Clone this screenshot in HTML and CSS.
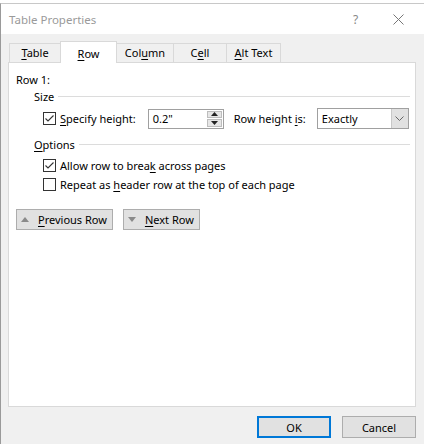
FILE: index.html
```html
<!DOCTYPE html>
<html lang="en">
<head>
  <meta charset="UTF-8">
  <title>Table Properties</title>
  <link rel="stylesheet" href="styles.css">
</head>
<body>
  <div class="window">
    <div class="titlebar">
      <span class="title">Table Properties</span>
      <span class="help">?</span>
      <span class="close">
        <svg width="11" height="11" viewBox="0 0 11 11"><path d="M0.5 0.5 L10.5 10.5 M10.5 0.5 L0.5 10.5" stroke="#777" stroke-width="1" fill="none"/></svg>
      </span>
    </div>

    <div class="client">
      <div class="tabs">
        <div class="tab tab-table"><u>T</u>able</div>
        <div class="tab tab-row selected"><u>R</u>ow</div>
        <div class="tab tab-column">Col<u>u</u>mn</div>
        <div class="tab tab-cell">C<u>e</u>ll</div>
        <div class="tab tab-alt"><u>A</u>lt Text</div>
      </div>

      <div class="panel">
        <div class="heading">Row 1:</div>

        <div class="group">
          <div class="group-title"><span>Size</span><div class="rule"></div></div>
          <div class="row">
            <span class="check"><svg width="11" height="11" viewBox="0 0 11 11"><path d="M1.5 5.5 L4 8 L9.5 2.5" stroke="#333" stroke-width="1.1" fill="none"/></svg></span>
            <span class="label"><u>S</u>pecify height:</span>
            <div class="spin">
              <span class="value">0.2"</span>
              <div class="spin-btns">
                <span class="spin-btn"><svg width="7" height="4" viewBox="0 0 7 4"><path d="M0 4 L3.5 0 L7 4 Z" fill="#222"/></svg></span>
                <span class="spin-btn"><svg width="7" height="4" viewBox="0 0 7 4"><path d="M0 0 L3.5 4 L7 0 Z" fill="#222"/></svg></span>
              </div>
            </div>
            <span class="label label-gap">Row height <u>i</u>s:</span>
            <div class="select">
              <span class="value">Exactly</span>
              <span class="drop"><svg width="9" height="5" viewBox="0 0 9 5"><path d="M0.5 0.5 L4.5 4.5 L8.5 0.5" stroke="#666" stroke-width="1" fill="none"/></svg></span>
            </div>
          </div>
        </div>

        <div class="group">
          <div class="group-title"><span><u>O</u>ptions</span><div class="rule"></div></div>
          <div class="option first">
            <span class="check"><svg width="11" height="11" viewBox="0 0 11 11"><path d="M1.5 5.5 L4 8 L9.5 2.5" stroke="#333" stroke-width="1.1" fill="none"/></svg></span>
            <span class="label">Allow row to brea<u>k</u> across pages</span>
          </div>
          <div class="option">
            <span class="check"></span>
            <span class="label">Repeat as <u>h</u>eader row at the top of each page</span>
          </div>
        </div>

        <div class="nav">
          <button class="btn nav-btn"><span class="tri up"></span><u>P</u>revious Row</button>
          <button class="btn nav-btn"><span class="tri down"></span><u>N</u>ext Row</button>
        </div>
      </div>

      <div class="footer">
        <button class="btn default">OK</button>
        <button class="btn">Cancel</button>
      </div>
    </div>
  </div>
</body>
</html>
```

FILE: styles.css
```css
* {
  box-sizing: border-box;
}

html, body {
  margin: 0;
  background: #fff;
}

body {
  padding-top: 3px;
  font-family: "Noto Sans", "Open Sans", sans-serif;
  font-size: 11px;
  color: #000;
}

u {
  text-decoration: underline;
  text-underline-offset: 2px;
}

.window {
  height: 441px;
  border-top: 1px solid #c8c8c8;
  border-left: 1px solid #9a9a9a;
  display: flex;
  flex-direction: column;
}

.titlebar {
  height: 30px;
  flex-shrink: 0;
  background: #fff;
  display: flex;
  align-items: center;
  padding-left: 8px;
}

.title {
  color: #9a9a9a;
  font-size: 11.5px;
  flex: 1;
}

.help {
  color: #888;
  font-size: 12px;
  width: 40px;
}

.close {
  width: 31px;
  display: flex;
  align-items: center;
}

.client {
  flex: 1;
  background: #f0f0f0;
  padding: 7px 8px 0 7px;
  display: flex;
  flex-direction: column;
}

/* tab strip */
.tabs {
  display: flex;
  align-items: flex-end;
  padding-left: 1px;
  height: 21px;
  position: relative;
  z-index: 1;
}

.tab {
  height: 19px;
  line-height: 18px;
  text-align: center;
  border: 1px solid #d9d9d9;
  border-bottom: none;
  margin-right: -1px;
  background: #f0f0f0;
  white-space: nowrap;
}

.tab.selected {
  height: 22px;
  line-height: 23px;
  background: #fff;
  margin-bottom: -1px;
}

.tab-table { width: 52px; }
.tab-row { width: 57px; }
.tab-column { width: 58px; }
.tab-cell { width: 54px; }
.tab-alt { width: 55px; }

.panel {
  height: 345px;
  flex-shrink: 0;
  background: #fff;
  border: 1px solid #d9d9d9;
  padding: 9px 0 0 7px;
}

.heading {
  height: 16px;
  line-height: 16px;
}

.group {
  padding-left: 18px;
}

.group + .group {
  margin-top: 1px;
}

.group-title {
  display: flex;
  align-items: center;
  height: 16px;
}

.rule {
  flex: 1;
  height: 1px;
  background: #dcdcdc;
  margin: 0 5px 0 4px;
}

.row {
  display: flex;
  align-items: center;
  height: 21px;
  margin: 4px 0 7px 9px;
}

.check {
  width: 13px;
  height: 13px;
  border: 1px solid #333;
  background: #fff;
  display: inline-flex;
  margin-right: 4px;
  flex-shrink: 0;
}

.label {
  white-space: nowrap;
}

.label-gap {
  margin: 0 11px 0 10px;
}

.spin {
  margin-left: 12px;
  width: 76px;
  height: 20px;
  border: 1px solid #a0a0a0;
  display: flex;
  background: #fff;
}

.value {
  flex: 1;
  padding-left: 4px;
  line-height: 18px;
}

.spin-btns {
  width: 16px;
  display: flex;
  flex-direction: column;
  padding: 1px 1px 1px 0;
  gap: 1px;
}

.spin-btn {
  flex: 1;
  background: #e6e6e6;
  border: 1px solid #bdbdbd;
  display: flex;
  align-items: center;
  justify-content: center;
}

.select {
  width: 92px;
  height: 21px;
  border: 1px solid #a0a0a0;
  display: flex;
  background: #fff;
}

.select .value {
  line-height: 19px;
}

.drop {
  width: 17px;
  background: #e1e1e1;
  border-left: 1px solid #c8c8c8;
  display: flex;
  align-items: center;
  justify-content: center;
}

.option {
  display: flex;
  align-items: center;
  height: 18px;
  margin-left: 9px;
  margin-top: 1px;
}

.option.first {
  margin-top: 4px;
}

.nav {
  display: flex;
  gap: 10px;
  margin-top: 16px;
}

.btn {
  font-family: inherit;
  font-size: 11px;
  color: #000;
  background: #e1e1e1;
  border: 1px solid #adadad;
  height: 21px;
  padding: 0;
  display: flex;
  align-items: center;
  justify-content: center;
}

.nav-btn {
  padding: 0 5px 0 4px;
}

.tri {
  width: 0;
  height: 0;
  border-left: 4px solid transparent;
  border-right: 4px solid transparent;
  margin-right: 9px;
}

.tri.up {
  border-bottom: 5px solid #8a8a8a;
}

.tri.down {
  border-top: 5px solid #8a8a8a;
}

.footer {
  display: flex;
  justify-content: flex-end;
  gap: 11px;
  padding-top: 9px;
}

.footer .btn {
  width: 74px;
  height: 22px;
}

.btn.default {
  border: 2px solid #0078d7;
}
```
